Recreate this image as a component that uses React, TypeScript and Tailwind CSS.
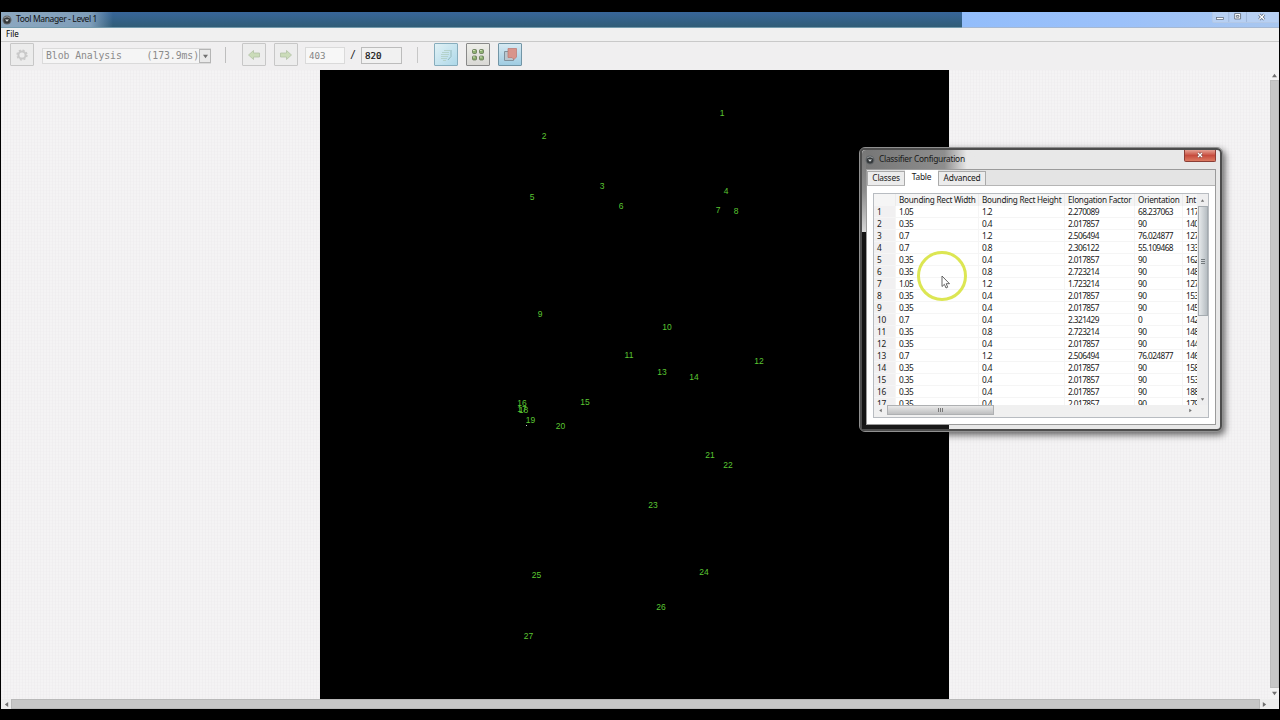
import React from "react";

const rows = [
  ["1.05", "1.2", "2.270089", "68.237063", "117"],
  ["0.35", "0.4", "2.017857", "90", "140"],
  ["0.7", "1.2", "2.506494", "76.024877", "127"],
  ["0.7", "0.8", "2.306122", "55.109468", "133"],
  ["0.35", "0.4", "2.017857", "90", "162"],
  ["0.35", "0.8", "2.723214", "90", "148"],
  ["1.05", "1.2", "1.723214", "90", "127"],
  ["0.35", "0.4", "2.017857", "90", "153"],
  ["0.35", "0.4", "2.017857", "90", "145"],
  ["0.7", "0.4", "2.321429", "0", "142"],
  ["0.35", "0.8", "2.723214", "90", "148"],
  ["0.35", "0.4", "2.017857", "90", "144"],
  ["0.7", "1.2", "2.506494", "76.024877", "146"],
  ["0.35", "0.4", "2.017857", "90", "158"],
  ["0.35", "0.4", "2.017857", "90", "153"],
  ["0.35", "0.4", "2.017857", "90", "188"],
  ["0.35", "0.4", "2.017857", "90", "179"],
];

// centre of every blob label, relative to the inspected image
const blobs = [
  [402, 43], [224, 66], [282, 116], [406, 121], [212, 127], [301, 136], [398, 140],
  [416, 141], [220, 244], [347, 257], [309, 285], [439, 291], [342, 302], [374, 307],
  [265, 332], [202, 333], [202, 339], [203.5, 340], [210.5, 350], [240.5, 356], [390, 385],
  [408, 395], [333, 435], [384, 502], [216.5, 505], [341, 537], [208.5, 566],
];

const AppIcon = ({ className = "" }) => (
  <svg className={className} width="10" height="10" viewBox="0 0 10 10">
    <circle cx="5" cy="5" r="4.5" fill="#626669" />
    <circle cx="5" cy="5.2" r="3.3" fill="#34383a" />
    <path d="M3 4.5h4L5 6.7z" fill="#d5d9db" />
    <path d="M2 3q3-2.4 6 0" fill="none" stroke="#a2a6a8" strokeWidth=".8" />
  </svg>
);

const Arrow = ({ className = "" }) => (
  <svg className={className} width="14" height="12" viewBox="0 0 14 12">
    <path d="M1.5 6 6.5 1.5V4h6v4h-6v2.5z" fill="#cbdcb9" stroke="#b3c2a6" strokeWidth=".8" />
  </svg>
);

const Triangle = ({ d }: { d: string }) => (
  <svg width="5" height="5" viewBox="0 0 6 6">
    <path d={d} fill="#707070" />
  </svg>
);

const ToolButton = ({ className = "", children }: { className?: string; children: React.ReactNode }) => (
  <div className={`flex h-[23px] w-6 shrink-0 items-center justify-center rounded-[1px] border ${className}`}>
    {children}
  </div>
);

const TitleBar = () => (
  <div className="flex h-4 shrink-0">
    <div className="flex w-[961px] items-center border-b border-[#739aac] bg-linear-to-b from-[#38669a] to-[#315d77]">
      <div className="flex h-full w-[112px] items-center bg-linear-to-r from-[#8da8c0] via-[#7e9db9] via-80% to-transparent pl-px">
        <AppIcon />
        <span className="ml-[4px] text-[8.5px] tracking-[-0.38px] whitespace-nowrap text-[#111]">Tool Manager - Level 1</span>
      </div>
    </div>
    <div className="flex flex-1 justify-end border-b border-[#a5b8d2] bg-linear-to-r from-[#92bdfb] via-[#9bc1fa] via-50% to-[#a9c7ef]">
      <div className="flex h-[11px] w-[67px] rounded-b-[2px] border-x border-b border-[#b4c9e7] bg-[#b7d0f3]">
        <svg width="66" height="10" viewBox="0 0 66 10">
          <path d="M16 0v10M34 0v10" stroke="#a0b8da" />
          <rect x="3.500" y="5.500" width="7" height="2" fill="#fff" stroke="#657080" strokeWidth=".8" />
          <path d="M22 1.500h6v5.500h-6zM23.700 3.500h2.600v1.700h-2.600z" fill="#fff" stroke="#657080" strokeWidth=".9" />
          <path d="m47 2.500 5 5m0-5-5 5" stroke="#59677a" strokeWidth="2.800" />
          <path d="m47 2.500 5 5m0-5-5 5" stroke="#fff" strokeWidth="1.300" />
        </svg>
      </div>
    </div>
  </div>
);

const Toolbar = () => (
  <div className="flex h-[28px] shrink-0 items-start bg-[#f0eff0] pl-[9px] pt-px font-['DejaVu_Sans_Mono',monospace]">
    <ToolButton className="border-[#c7c7c7] bg-[#ececec]">
      <svg width="14" height="14" viewBox="0 0 14 14" fill="none" stroke="#c9c9c9">
        <circle cx="7" cy="7" r="3.6" strokeWidth="2" />
        <circle cx="7" cy="7" r="4.9" strokeWidth="1.5" strokeDasharray="2 1.85" />
      </svg>
    </ToolButton>
    <div className="ml-[8px] mt-[5px] flex h-4 w-[169px] border border-[#dadada] bg-[#f5f5f5] text-[9.8px] leading-[14px] tracking-[-0.07px] text-[#8b8b8b]">
      <span className="w-[104px] pl-[3px] whitespace-nowrap">Blob Analysis</span>
      <span className="whitespace-nowrap">(173.9ms)</span>
      <span className="-mr-px ml-auto flex h-[14px] w-3 shrink-0 items-center justify-center border border-[#b5b5b5] bg-[#e9e9e9]">
        <Triangle d="M0 1h6L3 5z" />
      </span>
    </div>
    <div className="ml-[14px] mt-1 h-4 w-px bg-[#bebebe]" />
    <ToolButton className="ml-[16px] border-[#c7c7c7] bg-[#ededed]"><Arrow /></ToolButton>
    <ToolButton className="ml-2 border-[#c7c7c7] bg-[#ededed]"><Arrow className="rotate-180" /></ToolButton>
    <div className="ml-[7px] mt-1 h-[17px] w-10 border border-[#dadada] bg-[#f7f7f7] pl-[3px] text-[9.2px] leading-[15px] text-[#858585]">403</div>
    <span className="ml-[5px] mt-1 w-[7px] text-[10px] leading-4 text-[#222]">/</span>
    <div className="ml-1 mt-1 h-[17px] w-[41px] border border-[#bcbcbc] bg-[#f1f1f1] pl-[3px] text-[9.2px] leading-[15px] text-[#111] [-webkit-text-stroke:0.2px_#111]">820</div>
    <div className="ml-[15px] mt-1 h-4 w-px bg-[#c7c7c7]" />
    <ToolButton className="ml-[16px] border-[#87adbd] bg-linear-to-br from-[#e1f1f5] to-[#add8e9]">
      <svg width="14" height="14" viewBox="0 0 14 14" fill="none" stroke="#b1cfc6" strokeWidth=".9">
        <path d="M5 2.500h6M3 4.500h7M2 6.500h8M2 8.500h7M2 10.500h6M4 12.500h3" />
        <path d="M12 2v6.500L9 12" stroke="#8fb6b8" />
      </svg>
    </ToolButton>
    <ToolButton className="ml-2 border-[#898989] bg-linear-to-b from-[#eeeee9] to-[#d9d8d5]">
      <svg width="14" height="14" viewBox="0 0 14 14">
        <g fill="#8daf70" stroke="#566a48" strokeWidth=".7">
          <rect x="1.500" y="1.500" width="4" height="4" rx="1" />
          <rect x="8.500" y="1.500" width="4" height="4" rx="1" />
          <rect x="1.500" y="8" width="4" height="4" rx="1" />
          <rect x="8.500" y="8" width="4" height="4" rx="1" />
        </g>
        <path d="M2 2.500h1.800M9 2.500h1.800M2 9h1.800M9 9h1.800" stroke="#d1e3bd" />
      </svg>
    </ToolButton>
    <ToolButton className="ml-2 border-[#7295a6] bg-linear-to-b from-[#d6e9f2] to-[#9fcce2]">
      <svg width="16" height="16" viewBox="0 0 16 16">
        <path d="M2.500 4.500h9v9h-9z" fill="#bac6ce" stroke="#80909b" />
        <path d="M6 1.500h8.500v8.500L12 12.500 10 10.500H6z" fill="#d8948b" stroke="#bd756f" strokeWidth=".7" />
      </svg>
    </ToolButton>
  </div>
);

const Table = () => (
  <div className="mx-[6px] mt-[7px] flex h-[225px] flex-col border border-[#b8bcc1] bg-[#f0f0f0]">
    <div className="flex h-[211px]">
      <div className="w-[323px] overflow-hidden bg-white">
        <div className="grid h-3 grid-cols-[22px_83px_86px_70px_48px_60px] bg-[#f5f5f5] text-[8.2px] leading-[12px] tracking-[-0.25px] whitespace-nowrap [&>span]:border-r [&>span]:border-[#ececec] [&>span]:pl-[3px]">
          <span />
          <span>Bounding Rect Width</span>
          <span>Bounding Rect Height</span>
          <span>Elongation Factor</span>
          <span>Orientation</span>
          <span>Int</span>
        </div>
        {rows.map((row, i) => (
          <div
            key={i}
            className="grid h-3 grid-cols-[22px_83px_86px_70px_48px_60px] text-[8.3px] leading-[11px] tracking-[-0.58px] [&>span]:border-r [&>span]:border-b [&>span]:border-[#f5f5f5] [&>span]:pl-[3px]"
          >
            <span className="bg-[#f1f0f1] tracking-[-0.3px]">{i + 1}</span>
            {row.map((cell, j) => (
              <span key={j}>{cell}</span>
            ))}
          </div>
        ))}
      </div>
      <div className="flex flex-1 flex-col items-center bg-[#eeeeef]">
        <div className="flex h-3 items-center"><Triangle d="M1 4.500h4L3 1.500z" /></div>
        <div className="flex h-[110px] w-[10px] items-center justify-center border border-[#a4abb0] bg-linear-to-r from-[#e6e9eb] to-[#b7bec3]">
          <div className="h-[5px] w-1 border-y border-[#747a7e]"><div className="mt-px h-px bg-[#747a7e]" /></div>
        </div>
        <div className="mt-auto flex h-3 items-center"><Triangle d="M1 1.500h4L3 4.500z" /></div>
      </div>
    </div>
    <div className="flex flex-1 items-start">
      <div className="flex h-[10px] w-[13px] items-center justify-center"><Triangle d="M4.500 1v4L1.500 3z" /></div>
      <div className="flex h-[10px] w-[107px] items-center justify-center border border-[#aeb0b2] bg-linear-to-b from-[#e9e9e9] to-[#bebfc0]">
        <div className="flex h-1 w-[5px] justify-between border-x border-[#777] pl-px"><div className="w-px bg-[#777]" /></div>
      </div>
      <div className="ml-auto mr-[15px] flex h-[10px] items-center"><Triangle d="M1.500 1v4l3-2z" /></div>
    </div>
  </div>
);

const Classifier = () => (
  <div className="absolute left-[860px] top-[148px] flex h-[283px] w-[362px] flex-col rounded-[5px] border-2 border-[#4d4d4d] bg-[#e8e8e8] px-1 pb-1 font-['Noto_Sans',sans-serif] text-[#191919] shadow-[2px_3px_7px_1px_#0009] outline outline-[#909090]">
    <div className="absolute left-0 top-0 h-[82px] w-[88px] rounded-tl bg-linear-to-b from-[#777] via-[#8d8d8d] to-[#d7d7d7]" />
    <div className="absolute left-0 top-[82px] h-[197px] w-1 bg-[#141414]" />
    <div className="absolute bottom-0 left-0 h-1 w-[87px] bg-[#191919]" />
    <div className="relative flex h-[19px] shrink-0 items-start">
      <div className="flex h-full w-[112px] items-center bg-linear-to-r from-[#777] via-[#8e8e8e] via-70% to-[#e8e8e8] to-90%">
        <AppIcon className="-ml-px" />
        <span className="ml-[4px] text-[8.4px] tracking-[-0.26px] whitespace-nowrap">Classifier Configuration</span>
      </div>
      <div className="ml-auto flex h-[12px] w-8 items-center justify-center rounded-b-[2px] border border-t-0 border-[#8b3e36] bg-linear-to-b from-[#e5a194] via-[#c64c3e] to-[#dc7961]">
        <svg width="8" height="8" viewBox="0 0 8 8">
          <path d="m2 1 4 4m0-4L2 5" stroke="#7b4944" strokeWidth="2.500" />
          <path d="m2 1 4 4m0-4L2 5" stroke="#fff" strokeWidth="1.300" />
        </svg>
      </div>
    </div>
    <div className="relative flex-1 border border-[#9b9b9b] bg-white">
      <div className="flex h-[16px] items-end border-b border-[#b5b5b5] bg-[#e4e4e4] text-[8.4px] leading-[12px] tracking-[-0.22px]">
        <div className="h-[14px] w-[38px] border border-b-0 border-[#aaa] bg-[#ececec] text-center">Classes</div>
        <div className="-mb-px h-4 w-[33px] bg-white text-center leading-[14px]">Table</div>
        <div className="h-[14px] w-[48px] border border-b-0 border-[#aaa] bg-[#ececec] text-center">Advanced</div>
      </div>
      <Table />
    </div>
  </div>
);

const App = () => {
  return (
    <div className="relative h-[720px] w-[1280px] overflow-hidden bg-black px-px pt-3 font-['Noto_Sans',sans-serif] text-black">
      <div className="flex h-[697px] w-[1278px] flex-col bg-[#f3f2f3]">
        <TitleBar />
        <div className="h-[14px] shrink-0 border-b border-[#c9c9c9] bg-[#f0f0f0] pl-[5px] text-[8px] leading-[11px]">File</div>
        <Toolbar />
        <div className="flex h-[629px] shrink-0 bg-[#f4f3f4] bg-[linear-gradient(90deg,#ebe9eb66_1px,transparent_1px),linear-gradient(#ebe9eb33_1px,transparent_1px)] bg-size-[3px_3px]">
          <div className="relative ml-[319px] w-[629px] bg-black">
            {blobs.map(([x, y], i) => (
              <span
                key={i}
                className="absolute -translate-x-1/2 -translate-y-1/2 font-['Liberation_Sans',sans-serif] text-[8.5px] leading-[10px] text-[#5ac632]"
                style={{ left: x, top: y }}
              >
                {i + 1}
              </span>
            ))}
            <span className="absolute left-[206px] top-[355px] size-px bg-[#ccc]" />
          </div>
          <div className="ml-auto flex w-[9px] flex-col items-center bg-[#f2f2f2]">
            <div className="flex h-[10px] items-center"><Triangle d="M0 5h6L3 1z" /></div>
            <div className="w-full flex-1 border border-[#bbb] bg-[#c6c6c6]" />
            <div className="flex h-[11px] items-center"><Triangle d="M0 1h6L3 5z" /></div>
          </div>
        </div>
        <div className="flex flex-1 items-center bg-[#ededed]">
          <div className="flex w-[10px] justify-center"><Triangle d="M5 0v6L1 3z" /></div>
          <div className="h-full flex-1 border border-[#b8b8b8] bg-[#c6c6c6]" />
          <div className="flex w-[19px] pl-[2px]"><Triangle d="M1 0v6l4-3z" /></div>
        </div>
      </div>
      <Classifier />
      <div className="absolute left-[917px] top-[251px] size-[50px] rounded-full border-[3px] border-[#dce653]" />
      <svg className="absolute left-[941px] top-[275px]" width="10" height="15" viewBox="0 0 10 15">
        <path d="M1 1v10.500l2.400-2.200L5 13l1.700-.8L5.200 8.700h3.300z" fill="#fff" stroke="#555" strokeWidth=".9" />
      </svg>
    </div>
  );
};

export default App;
